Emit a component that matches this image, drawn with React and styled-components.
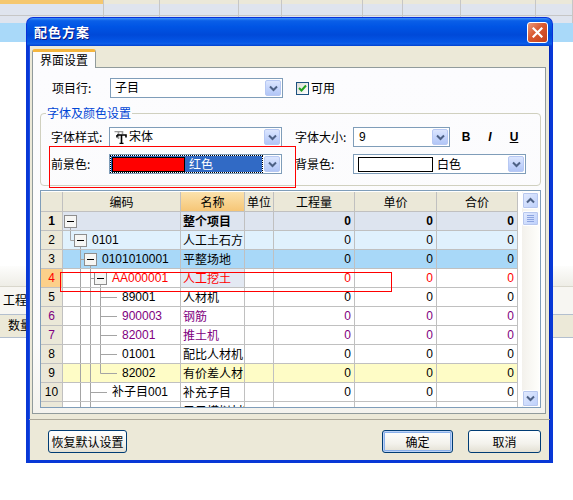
import styled, { createGlobalStyle } from 'styled-components';

const FONT = `"Liberation Sans", "Noto Sans CJK SC", sans-serif`;

const GlobalStyle = createGlobalStyle`
  html, body { margin: 0; padding: 0; }
  body {
    width: 573px;
    height: 500px;
    overflow: hidden;
    background: #fff;
    font-family: ${FONT};
    font-size: 12px;
    line-height: 14px;
    color: #000;
  }
  * { box-sizing: border-box; }
`;

const bgCols = [104, 56, 79, 43, 81, 40, 58, 75, 37];

// last row is only partly visible at the bottom edge of the grid
const rows = [
  { id: 1, n: '1', code: '', name: '整个项目', bold: true, bg: '#dde4ef', tree: { box: 1, down: 7 } },
  { id: 2, n: '2', code: '0101', name: '人工土石方', bg: '#e0f1fd', pad: 29, tree: { top: [7], h: [7, 11], box: 11, down: 17 } },
  { id: 3, n: '3', code: '0101010001', name: '平整场地', bg: '#a8d8f8', pad: 39, tree: { full: [17], h: [17, 21], box: 21, down: 27 } },
  { id: 4, n: '4', code: 'AA000001', name: '人工挖土', color: '#ff0000', numBg: '#fcd08a', nameBg: '#e3e9f3', pad: 49, tree: { full: [17, 27], h: [27, 31], box: 31, down: 37 } },
  { id: 5, n: '5', code: '89001', name: '人材机', pad: 59, tree: { full: [17, 27, 37], h: [37, 54] } },
  { id: 6, n: '6', code: '900003', name: '钢筋', color: '#800080', pad: 59, tree: { full: [17, 27, 37], h: [37, 54] } },
  { id: 7, n: '7', code: '82001', name: '推土机', color: '#800080', pad: 59, tree: { full: [17, 27, 37], h: [37, 54] } },
  { id: 8, n: '8', code: '01001', name: '配比人材机', pad: 59, tree: { full: [17, 27, 37], h: [37, 54] } },
  { id: 9, n: '9', code: '82002', name: '有价差人材', bg: '#fefcc6', pad: 59, tree: { full: [17, 27], top: [37], h: [37, 54] } },
  { id: 10, n: '10', code: '补子目001', name: '补充子目', pad: 49, tree: { full: [17, 27], h: [27, 44] } },
  { id: 11, n: '', code: '', name: '子目模拟材料', pad: 49, empty: true, tree: { full: [17, 27] } },
];

export default function App() {
  return (
    <Desktop>
      <GlobalStyle />
      <BgRow $h={4}>
        {bgCols.map((w, i) => <BgCell key={i} $w={w} $bg={i === 0 ? '#f5c76f' : '#ebe8d9'} />)}
      </BgRow>
      <BgRow $h={12} $bg="#dfe4ee" $line>
        {bgCols.map((w, i) => <BgCell key={i} $w={w} />)}
      </BgRow>
      <BgRow $h={7} $bg="#dfe4ee">
        {bgCols.map((w, i) => <BgCell key={i} $w={w} />)}
      </BgRow>
      <BgRow $h={19} $bg="#a9d9f9" />
      <BgRow $h={224} $bg="#fff" />
      <TabBand />
      <BgItem $h={28} $indent={3} $bg="#f7f6f2">工程</BgItem>
      <BgItem $h={23} $indent={8} $bg="#ece9d8">数量</BgItem>

      <Dialog>
        <TitleBar>
          <TitleText>配色方案</TitleText>
          <CloseButton>
            <svg width="11" height="11" viewBox="0 0 11 11">
              <path d="M1.5 1.5 L9.5 9.5 M9.5 1.5 L1.5 9.5" stroke="#fff" strokeWidth="2.2" strokeLinecap="square" />
            </svg>
          </CloseButton>
        </TitleBar>
        <Frame>
          <TabArea>
            <Tab>界面设置</Tab>
            <Panel>
              <FormRow>
                <FieldLabel>项目行:</FieldLabel>
                <Combo $w={173}>
                  <ComboText>子目</ComboText>
                  <DropButton><Chevron /></DropButton>
                </Combo>
                <CheckWrap>
                  <CheckBox>
                    <svg width="9" height="9" viewBox="0 0 9 9">
                      <path d="M1 4 L3.5 6.5 L8 1.5" fill="none" stroke="#21a121" strokeWidth="2" />
                    </svg>
                  </CheckBox>
                  可用
                </CheckWrap>
              </FormRow>

              <GroupBox>
                <GroupTitle>字体及颜色设置</GroupTitle>
                <FormRow>
                  <FieldLabel>字体样式:</FieldLabel>
                  <Combo $w={173}>
                    <TTIcon>
                      <svg width="13" height="13" viewBox="0 0 13 13">
                        <path d="M0.5 0.5 H8.5 V3 M4.5 0.5 V8" fill="none" stroke="#9a9a9a" strokeWidth="1.6" />
                        <path d="M3 4 H12 V6.5 M3 4 V6.5 M7.5 4 V12.5 M5.5 12.5 H9.5" fill="none" stroke="#000" strokeWidth="1.6" />
                      </svg>
                    </TTIcon>
                    <ComboText $pad={0}>宋体</ComboText>
                    <DropButton><Chevron /></DropButton>
                  </Combo>
                  <FieldLabel $left={13}>字体大小:</FieldLabel>
                  <Combo $w={97}>
                    <ComboText $pad={4}>9</ComboText>
                    <DropButton><Chevron /></DropButton>
                  </Combo>
                  <StyleButtons>
                    <StyleButton>B</StyleButton>
                    <StyleButton $italic>I</StyleButton>
                    <StyleButton $underline>U</StyleButton>
                  </StyleButtons>
                </FormRow>
                <FormRow>
                  <FieldLabel>前景色:</FieldLabel>
                  <Combo $w={173}>
                    <Selected>
                      <Swatch $color="#ff0000" $w={73} />
                      <SwatchText $selected>红色</SwatchText>
                    </Selected>
                    <DropButton><Chevron /></DropButton>
                  </Combo>
                  <FieldLabel $left={13}>背景色:</FieldLabel>
                  <Combo $w={173}>
                    <Swatch $color="#fff" $w={75} $ml={3} />
                    <SwatchText>白色</SwatchText>
                    <DropButton><Chevron /></DropButton>
                  </Combo>
                </FormRow>
              </GroupBox>

              <GridBox>
                <Grid>
                  <HeadCell />
                  <HeadCell>编码</HeadCell>
                  <HeadCell $active>名称</HeadCell>
                  <HeadCell>单位</HeadCell>
                  <HeadCell>工程量</HeadCell>
                  <HeadCell>单价</HeadCell>
                  <HeadCell>合价</HeadCell>
                  {rows.map((r) => (
                    <Row key={r.id} r={r} />
                  ))}
                </Grid>
                <ScrollBar>
                  <ScrollButton><ScrollArrow up /></ScrollButton>
                  <Thumb>
                    <Grip /><Grip /><Grip /><Grip />
                  </Thumb>
                  <ScrollSpace />
                  <ScrollButton><ScrollArrow /></ScrollButton>
                </ScrollBar>
              </GridBox>
            </Panel>
          </TabArea>
          <Divider />
          <ButtonRow>
            <XPButton $w={79}>恢复默认设置</XPButton>
            <XPButton $w={71} $default $push>确定</XPButton>
            <XPButton $w={73}>取消</XPButton>
          </ButtonRow>
        </Frame>
      </Dialog>

      <Annotation style={{ left: 49, top: 146, width: 247, height: 42 }} />
      <Annotation style={{ left: 60, top: 272, width: 332, height: 20 }} />
    </Desktop>
  );
}

function Row({ r }) {
  const color = r.color || '#000';
  return (
    <>
      <NumCell $bg={r.numBg} $color={color} $bold={r.bold}>{r.n}</NumCell>
      <CodeCell $bg={r.bg} $color={color} $pad={r.pad}>
        <TreeLines t={r.tree} />
        <span>{r.code}</span>
      </CodeCell>
      <NameCell $bg={r.nameBg || r.bg} $color={color} $bold={r.bold}>{r.name}</NameCell>
      <DataCell $bg={r.bg} />
      {[0, 1, 2].map((i) => (
        <DataCell key={i} $bg={r.bg} $color={color} $bold={r.bold}>
          {r.empty ? '' : '0'}
        </DataCell>
      ))}
    </>
  );
}

function TreeLines({ t }) {
  const L = '#a4a4a4';
  return (
    <TreeSvg width="118" height="18" viewBox="0 0 118 18">
      {(t.full || []).map((x) => (
        <line key={'f' + x} x1={x + 0.5} y1={0} x2={x + 0.5} y2={18} stroke={L} />
      ))}
      {(t.top || []).map((x) => (
        <line key={'t' + x} x1={x + 0.5} y1={0} x2={x + 0.5} y2={9.5} stroke={L} />
      ))}
      {t.h && <line x1={t.h[0] + 0.5} y1={9.5} x2={t.h[1]} y2={9.5} stroke={L} />}
      {t.down != null && <line x1={t.down + 0.5} y1={15} x2={t.down + 0.5} y2={18} stroke={L} />}
      {t.box != null && (
        <g>
          <rect x={t.box + 0.5} y={3.5} width={12} height={12} fill="#f6f6f4" stroke="#8e8e8e" />
          <line x1={t.box + 3} y1={9.5} x2={t.box + 10} y2={9.5} stroke="#000" />
        </g>
      )}
    </TreeSvg>
  );
}

function Chevron() {
  return (
    <svg width="9" height="7" viewBox="0 0 9 7">
      <path d="M1 1.5 L4.5 5 L8 1.5" fill="none" stroke="#4d6185" strokeWidth="2" />
    </svg>
  );
}

function ScrollArrow({ up }) {
  return (
    <svg width="9" height="7" viewBox="0 0 9 7">
      <path d={up ? 'M1 5.5 L4.5 2 L8 5.5' : 'M1 1.5 L4.5 5 L8 1.5'} fill="none" stroke="#4d6185" strokeWidth="2" />
    </svg>
  );
}

/* ---------- background page ---------- */

const Desktop = styled.div`
  position: relative;
  width: 573px;
  height: 500px;
  overflow: hidden;
  display: flex;
  flex-direction: column;
  background: #fff;
`;

const BgRow = styled.div`
  display: flex;
  flex: none;
  height: ${(p) => p.$h}px;
  background: ${(p) => p.$bg || 'transparent'};
  border-bottom: ${(p) => (p.$line ? '1px solid #c6c6c6' : 'none')};
`;

const BgCell = styled.div`
  flex: none;
  width: ${(p) => p.$w}px;
  height: 100%;
  border-right: 1px solid #c6c6c6;
  background: ${(p) => p.$bg || 'transparent'};
`;

const TabBand = styled.div`
  flex: none;
  height: 21px;
  background: linear-gradient(#fdfdfc, #eeede6);
  border-bottom: 1px solid #d9d7cc;
`;

const BgItem = styled.div`
  flex: none;
  height: ${(p) => p.$h}px;
  padding-left: ${(p) => p.$indent}px;
  display: flex;
  align-items: center;
  background: ${(p) => p.$bg};
  border-bottom: 1px solid #b3bfcf;
  font-size: 12px;
`;

/* ---------- dialog window ---------- */

const Dialog = styled.section`
  position: absolute;
  left: 26px;
  top: 17px;
  width: 527px;
  height: 446px;
  display: flex;
  flex-direction: column;
`;

const TitleBar = styled.div`
  flex: none;
  height: 29px;
  display: flex;
  align-items: center;
  justify-content: space-between;
  padding: 0 4px 0 7px;
  border-radius: 7px 7px 0 0;
  border: 1px solid #0831d9;
  border-bottom: none;
  background: linear-gradient(#3d8ff8 0%, #0a5fe8 10%, #0055e5 30%, #0049d8 60%, #0456e6 85%, #0d5ee8 92%, #0040cf 100%);
`;

const TitleText = styled.span`
  color: #fff;
  font-family: "Noto Sans CJK SC", sans-serif;
  font-weight: 700;
  font-size: 13px;
  letter-spacing: 1px;
  text-shadow: 1px 1px 0 #0a1883;
`;

const CloseButton = styled.div`
  width: 21px;
  height: 21px;
  display: flex;
  align-items: center;
  justify-content: center;
  border: 1px solid #fff;
  border-radius: 3px;
  background: linear-gradient(135deg, #eb9a7c 0%, #d9582f 45%, #c4411b 100%);
`;

const Frame = styled.div`
  flex: 1;
  display: flex;
  flex-direction: column;
  background: #ece9d8;
  border: 3px solid #0838d6;
  border-top: none;
  box-shadow: inset 1px 0 0 #1b4ee6, inset -1px 0 0 #0025b8;
`;

const TabArea = styled.div`
  flex: none;
  display: flex;
  flex-direction: column;
  align-items: flex-start;
  padding: 3px 4px 0 3px;
`;

const Tab = styled.div`
  position: relative;
  z-index: 1;
  width: 64px;
  height: 19px;
  margin-bottom: -1px;
  padding: 2px 0 0 7px;
  background: #fcfcfe;
  border: 1px solid #919b9c;
  border-bottom: none;
  border-top: 3px solid #f5b63f;
  border-radius: 3px 3px 0 0;
  font-family: "Noto Sans CJK SC", sans-serif;
  font-size: 12px;
  line-height: 12px;
`;

const Panel = styled.div`
  align-self: stretch;
  height: 347px;
  display: flex;
  flex-direction: column;
  padding: 10px 4px 4px 7px;
  border: 1px solid #919b9c;
  background: linear-gradient(#fcfcfe 0%, #fbfbfc 80%, #f4f3ee 100%);
`;

const FormRow = styled.div`
  display: flex;
  align-items: center;
  height: 20px;
  padding-left: 12px;
`;

const FieldLabel = styled.span`
  flex: none;
  width: 58px;
  margin-left: ${(p) => p.$left || 0}px;
  font-family: "Noto Sans CJK SC", sans-serif;
  white-space: nowrap;
`;

const Combo = styled.div`
  flex: none;
  width: ${(p) => p.$w}px;
  height: 20px;
  display: flex;
  align-items: center;
  padding: 1px;
  border: 1px solid #7f9db9;
  background: #fff;
`;

const ComboText = styled.span`
  flex: 1;
  padding-left: ${(p) => (p.$pad != null ? p.$pad : 3)}px;
  white-space: nowrap;
`;

const DropButton = styled.div`
  flex: none;
  width: 16px;
  height: 16px;
  margin-left: auto;
  display: flex;
  align-items: center;
  justify-content: center;
  border: 1px solid #b7c8f3;
  border-radius: 2px;
  background: linear-gradient(#dce6fe, #c1d2fb 60%, #b2c6f6);
`;

const CheckWrap = styled.label`
  display: flex;
  align-items: center;
  gap: 2px;
  margin-left: 13px;
  font-family: "Noto Sans CJK SC", sans-serif;
`;

const CheckBox = styled.span`
  width: 13px;
  height: 13px;
  display: flex;
  align-items: center;
  justify-content: center;
  border: 1px solid #1c5180;
  background: linear-gradient(135deg, #dcdcd7, #fff);
`;

const GroupBox = styled.fieldset`
  margin: 8px 0 0;
  padding: 7px 0 11px 0;
  min-width: 0;
  border: 1px solid #d0d0bf;
  border-radius: 4px;
  display: flex;
  flex-direction: column;
  gap: 7px;

  ${FormRow} {
    padding-left: 10px;
  }
`;

const GroupTitle = styled.legend`
  margin-left: 5px;
  padding: 0 1px;
  color: #0046d5;
  font-family: "Noto Sans CJK SC", sans-serif;
  font-size: 12px;
  line-height: 14px;
`;

const TTIcon = styled.span`
  flex: none;
  width: 13px;
  height: 13px;
  margin: 0 2px 0 3px;
  display: flex;
`;

const StyleButtons = styled.div`
  display: flex;
  margin-left: 4px;
`;

const StyleButton = styled.span`
  width: 24px;
  text-align: center;
  font-family: "Liberation Sans", sans-serif;
  font-weight: 700;
  font-size: 12px;
  font-style: ${(p) => (p.$italic ? 'italic' : 'normal')};
  text-decoration: ${(p) => (p.$underline ? 'underline' : 'none')};
`;

const Selected = styled.div`
  flex: 1;
  height: 16px;
  display: flex;
  align-items: center;
  padding-left: 1px;
  margin-right: 2px;
  background: #316ac5;
  outline: 1px dotted #000;
  outline-offset: 0;
`;

const Swatch = styled.span`
  flex: none;
  width: ${(p) => p.$w}px;
  height: 15px;
  margin-left: ${(p) => p.$ml || 0}px;
  background: ${(p) => p.$color};
  border: 1px solid #000;
`;

const SwatchText = styled.span`
  margin-left: 4px;
  color: ${(p) => (p.$selected ? '#fff' : '#000')};
  font-family: "Noto Sans CJK SC", sans-serif;
`;

/* ---------- grid ---------- */

const GridBox = styled.div`
  margin-top: 4px;
  height: 218px;
  display: flex;
  padding-top: 1px;
  border: 1px solid #7f9db9;
  background: #fff;
`;

const Grid = styled.div`
  flex: none;
  width: 477px;
  height: 215px;
  overflow: hidden;
  display: grid;
  grid-template-columns: 22px 118px 64px 29px 81px 82px 81px;
  grid-template-rows: 20px;
  grid-auto-rows: 19px;
  align-content: start;
`;

const Cell = styled.div`
  display: flex;
  align-items: center;
  min-width: 0;
  overflow: hidden;
  white-space: nowrap;
  border-right: 1px solid #c0c0c0;
  border-bottom: 1px solid #c0c0c0;
  color: ${(p) => p.$color || '#000'};
  font-weight: ${(p) => (p.$bold ? 700 : 400)};
  background: ${(p) => p.$bg || '#fff'};
`;

const HeadCell = styled(Cell)`
  justify-content: center;
  font-family: "Noto Sans CJK SC", sans-serif;
  background: ${(p) => (p.$active ? 'linear-gradient(#fbe2ad, #f6c676)' : '#ebe8d8')};
`;

const NumCell = styled(Cell)`
  justify-content: center;
  background: ${(p) => p.$bg || '#ebe8d8'};
`;

const CodeCell = styled(Cell)`
  position: relative;
  padding-left: ${(p) => p.$pad || 0}px;

  span {
    position: relative;
  }
`;

const TreeSvg = styled.svg`
  position: absolute;
  left: 0;
  top: 0;
`;

const NameCell = styled(Cell)`
  padding-left: 2px;
  font-family: "Noto Sans CJK SC", sans-serif;
`;

const DataCell = styled(Cell)`
  justify-content: flex-end;
  padding-right: 3px;
`;

const ScrollBar = styled.div`
  flex: none;
  width: 17px;
  height: 215px;
  margin: 0 1px 0 auto;
  display: flex;
  flex-direction: column;
  background: linear-gradient(to right, #f3f1ec, #fefefb);
`;

const ScrollButton = styled.div`
  flex: none;
  width: 17px;
  height: 17px;
  display: flex;
  align-items: center;
  justify-content: center;
  border: 1px solid #fff;
  border-radius: 2px;
  background: linear-gradient(135deg, #e3ebfe, #bccffb);
  box-shadow: 0 0 0 1px #b7c7ee inset;
`;

const Thumb = styled(ScrollButton)`
  height: 15px;
  margin-top: 2px;
  flex-direction: column;
  gap: 1px;
`;

const Grip = styled.span`
  width: 7px;
  height: 1px;
  background: #8ca4e0;
`;

const ScrollSpace = styled.div`
  flex: 1;
`;

/* ---------- bottom buttons ---------- */

const Divider = styled.div`
  flex: none;
  height: 1px;
  margin-top: 5px;
  background: #aca899;
`;

const ButtonRow = styled.div`
  display: flex;
  align-items: center;
  gap: 15px;
  padding: 10px 9px 0 19px;
`;

const XPButton = styled.div`
  flex: none;
  width: ${(p) => p.$w}px;
  height: 23px;
  margin-left: ${(p) => (p.$push ? 'auto' : '0')};
  display: flex;
  align-items: center;
  justify-content: center;
  border: 1px solid #003c74;
  border-radius: 3px;
  background: linear-gradient(#ffffff, #f3f2ec 60%, #e3e0d3);
  font-family: "Noto Sans CJK SC", sans-serif;
  font-size: 12px;
  box-shadow: ${(p) => (p.$default ? 'inset 0 0 0 1px #bcd2f6, inset 0 0 0 2px #8ab0ea' : 'none')};
`;

const Annotation = styled.div`
  position: absolute;
  border: 1px solid #ff0000;
  pointer-events: none;
`;
